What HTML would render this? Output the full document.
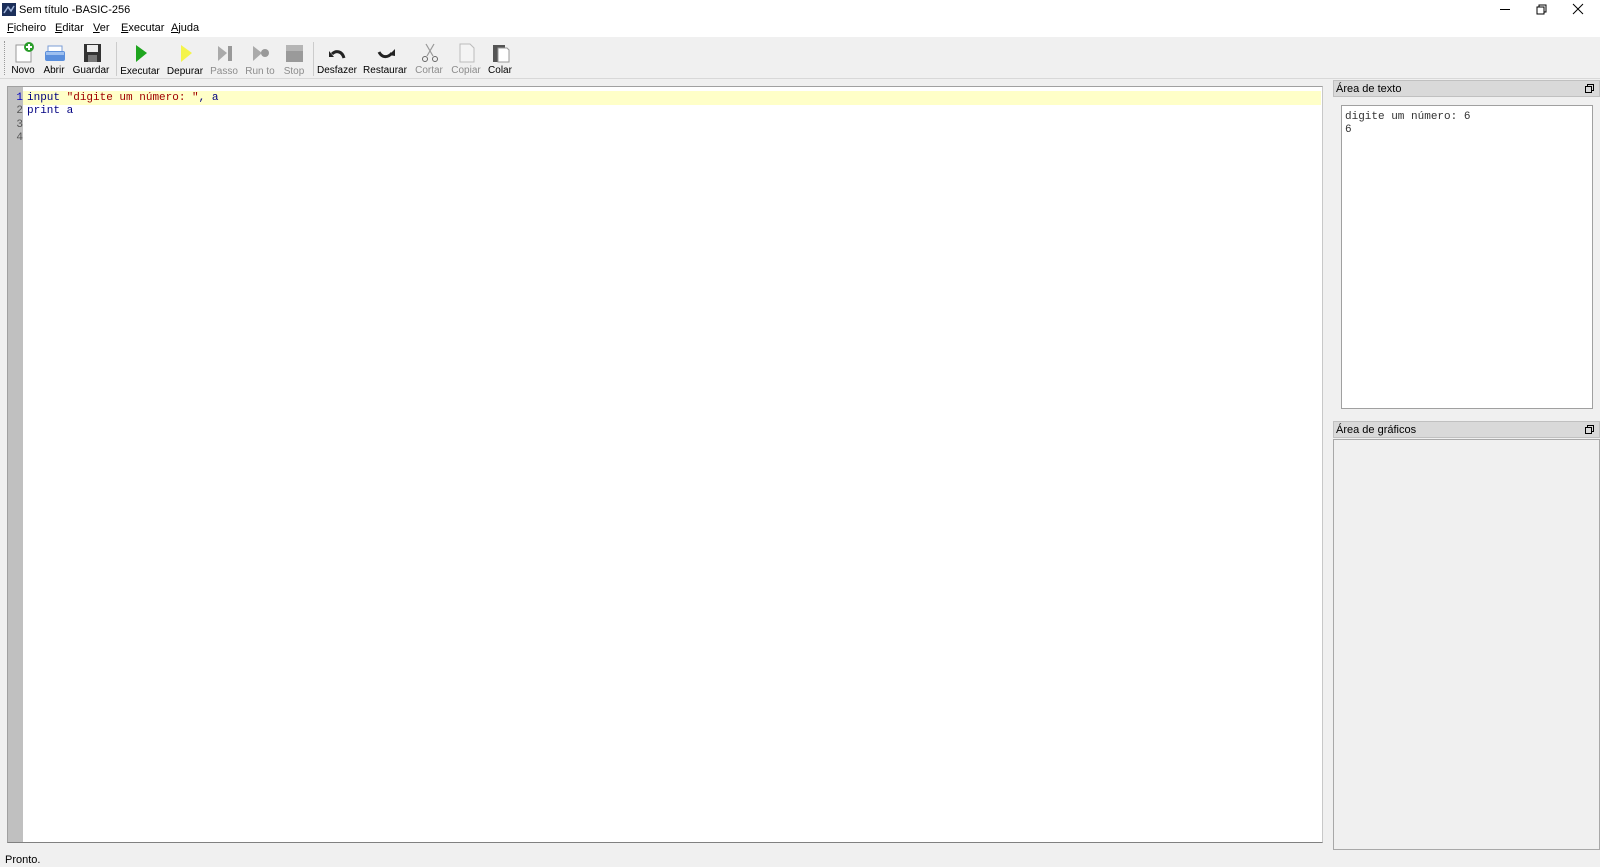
<!DOCTYPE html>
<html><head><meta charset="utf-8"><style>
*{margin:0;padding:0;box-sizing:border-box}
body{width:1600px;height:867px;background:#f0f0f0;font-family:"Liberation Sans",sans-serif;font-size:11px;color:#000;position:relative;overflow:hidden}
.abs{position:absolute}
.title{left:0;top:0;width:1600px;height:36px;background:#fff}
.menu{left:0;top:19px;width:1600px;height:18px;background:#fff}
.menu span{position:absolute;top:3px;font-size:11px}
.tb{left:0;top:37px;width:1600px;height:42px;background:#f0f0f0;border-bottom:1px solid #d8d8d8}
.btn{position:absolute;top:0;width:50px;margin-left:-25px;text-align:center}
.btn .lb{position:absolute;top:28px;width:100%;text-align:center;font-size:10px}
.btn svg{position:absolute;left:15px;top:5px}
.dis{color:#8c8c8c}
.sep{position:absolute;top:5px;width:1px;height:34px;background:#ccc}
.mono{font-family:"Liberation Mono","Courier New",monospace;font-size:11px}
</style></head><body>
<div class="abs title"></div>
<svg class="abs" style="left:2px;top:3px" width="14" height="13"><rect width="14" height="13" fill="#1c2f5a"/><path d="M2 10 L6 4 L9 8 L12 3" stroke="#9fb3d9" stroke-width="1.5" fill="none"/></svg>
<div class="abs" style="left:19px;top:4px;font-size:11px">Sem título -BASIC-256</div>
<div class="abs" style="left:1500px;top:9px;width:10px;height:1px;background:#000"></div>
<svg class="abs" style="left:1536px;top:4px" width="12" height="12"><rect x="1" y="3" width="7" height="7" fill="none" stroke="#000"/><path d="M3 3V1H10V8H8" fill="none" stroke="#000"/></svg>
<svg class="abs" style="left:1572px;top:3px" width="12" height="12"><path d="M1 1L11 11M11 1L1 11" stroke="#000" stroke-width="1"/></svg>
<div class="abs menu">
<span style="left:7px"><u>F</u>icheiro</span><span style="left:55px"><u>E</u>ditar</span><span style="left:93px"><u>V</u>er</span><span style="left:121px"><u>E</u>xecutar</span><span style="left:171px"><u>A</u>juda</span>
</div>
<div class="abs tb">
<div style="position:absolute;left:4px;top:4px;width:2px;height:34px;border-left:1px dotted #999"></div>
<div class="btn" style="left:23px"><svg width="22" height="22"><path d="M3 3H13L18 8V20H3Z" fill="#fff" stroke="#999"/><circle cx="16" cy="5" r="5" fill="#2a9d2a"/><path d="M16 2V8M13 5H19" stroke="#fff" stroke-width="2"/></svg><div class="lb">Novo</div></div>
<div class="btn" style="left:54px"><svg width="22" height="22"><rect x="4" y="4" width="14" height="6" fill="#fff" stroke="#7a9cd6"/><rect x="1" y="9" width="20" height="10" rx="2" fill="#5b8fdc"/><rect x="2" y="10" width="18" height="3" fill="#9ec0f0"/></svg><div class="lb">Abrir</div></div>
<div class="btn" style="left:91px"><svg width="22" height="22"><rect x="3" y="2" width="17" height="18" fill="#333"/><rect x="6" y="3" width="11" height="7" fill="#eee"/><rect x="7" y="13" width="9" height="7" fill="#777"/></svg><div class="lb">Guardar</div></div>
<div class="sep" style="left:116px"></div>
<div class="btn" style="left:140px"><svg width="22" height="22"><path d="M6 3L17 11L6 20Z" fill="#1ea51e"/></svg><div class="lb" style="top:29px">Executar</div></div>
<div class="btn" style="left:185px"><svg width="22" height="22"><path d="M6 3L17 11L6 20Z" fill="#f4f44a"/></svg><div class="lb" style="top:29px">Depurar</div></div>
<div class="btn dis" style="left:224px"><svg width="22" height="22"><path d="M4 4L13 11L4 19Z" fill="#aaa"/><rect x="14" y="4" width="4" height="15" fill="#999"/></svg><div class="lb" style="top:29px">Passo</div></div>
<div class="btn dis" style="left:260px"><svg width="22" height="22"><path d="M3 4L12 11L3 19Z" fill="#aaa"/><circle cx="15" cy="11" r="4" fill="#999"/></svg><div class="lb" style="top:29px">Run to</div></div>
<div class="btn dis" style="left:294px"><svg width="22" height="22"><rect x="2" y="3" width="17" height="17" fill="#9a9a9a"/><rect x="2" y="3" width="17" height="6" fill="#b5b5b5"/></svg><div class="lb" style="top:29px">Stop</div></div>
<div class="sep" style="left:313px"></div>
<div class="btn" style="left:337px"><svg width="22" height="22"><path d="M17 16C15 9 9 8 5 12" stroke="#222" stroke-width="3" fill="none"/><path d="M2 9L7 15L2 15Z" fill="#222"/></svg><div class="lb">Desfazer</div></div>
<div class="btn" style="left:385px"><svg width="22" height="22"><path d="M4 10C7 16 13 16 17 11" stroke="#222" stroke-width="3" fill="none"/><path d="M20 7L20 14L14 13Z" fill="#222"/></svg><div class="lb">Restaurar</div></div>
<div class="btn dis" style="left:429px"><svg width="22" height="22"><path d="M7 2L14 14M15 2L8 14" stroke="#999" stroke-width="1.2"/><circle cx="6" cy="17" r="2.5" fill="none" stroke="#666"/><circle cx="16" cy="17" r="2.5" fill="none" stroke="#666"/></svg><div class="lb">Cortar</div></div>
<div class="btn dis" style="left:466px"><svg width="22" height="22"><path d="M4 2H14L18 6V20H4Z" fill="#f4f4f4" stroke="#bbb"/></svg><div class="lb">Copiar</div></div>
<div class="btn" style="left:500px"><svg width="22" height="22"><rect x="3" y="3" width="12" height="17" fill="#555"/><path d="M8 6H17L19 8V20H8Z" fill="#fff" stroke="#999"/></svg><div class="lb">Colar</div></div>
</div>
<!-- editor -->
<div class="abs" style="left:7px;top:86px;width:1316px;height:757px;background:#fff;border:1px solid #a0a0a0;border-right-color:#c8c8c8;border-bottom-color:#808080"></div>
<div class="abs" style="left:8px;top:87px;width:15px;height:755px;background:#c0c0c0"></div>
<div class="abs" style="left:23px;top:91px;width:1298px;height:14px;background:#ffffc8"></div>
<div class="abs mono" style="left:8px;top:92px;width:15px;text-align:right;line-height:13.4px;color:#555">
<div style="color:#0000c0">1</div><div>2</div><div>3</div><div>4</div></div>
<div class="abs mono" style="left:27px;top:92px;line-height:13.4px;white-space:pre"><div><span style="color:#000080">input</span> <span style="color:#a00000">"digite um número: "</span><span style="color:#000080">, a</span></div><div style="color:#000080">print a</div></div>
<!-- text area -->
<div class="abs" style="left:1333px;top:80px;width:267px;height:17px;background:#d9d9d9;border:1px solid #c0c0c0"></div>
<div class="abs" style="left:1336px;top:83px;font-size:11px">Área de texto</div>
<svg class="abs" style="left:1585px;top:84px" width="9" height="9"><rect x="0.5" y="2.5" width="6" height="6" fill="none" stroke="#000"/><path d="M2.5 2.5V0.5H8.5V6.5H6.5" fill="none" stroke="#000"/></svg>
<div class="abs" style="left:1341px;top:105px;width:252px;height:304px;background:#fff;border:1px solid #a0a0a0"></div>
<div class="abs mono" style="left:1345px;top:111px;line-height:13.4px;color:#333;white-space:pre">digite um número: 6
6</div>
<!-- graphics -->
<div class="abs" style="left:1333px;top:421px;width:267px;height:17px;background:#d9d9d9;border:1px solid #c0c0c0"></div>
<div class="abs" style="left:1336px;top:424px;font-size:11px">Área de gráficos</div>
<svg class="abs" style="left:1585px;top:425px" width="9" height="9"><rect x="0.5" y="2.5" width="6" height="6" fill="none" stroke="#000"/><path d="M2.5 2.5V0.5H8.5V6.5H6.5" fill="none" stroke="#000"/></svg>
<div class="abs" style="left:1333px;top:439px;width:267px;height:411px;background:#f0f0f0;border:1px solid #a8a8a8"></div>
<div class="abs" style="left:5px;top:854px;font-size:11px">Pronto.</div>
</body></html>
